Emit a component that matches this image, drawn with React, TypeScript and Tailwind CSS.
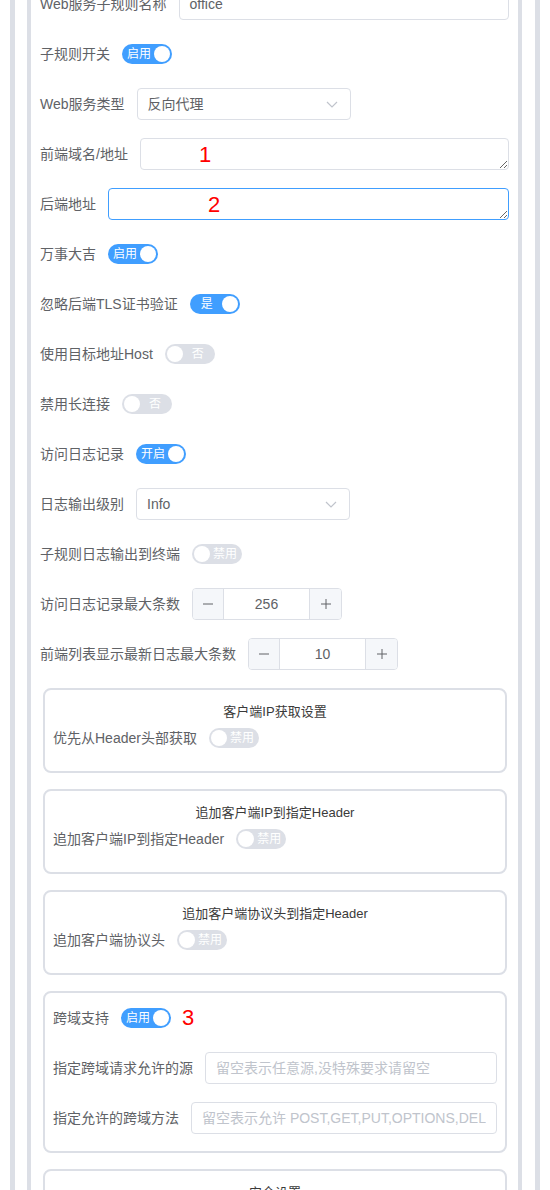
import React from "react";

const FONT = "font-['Liberation_Sans','Noto_Sans_CJK_SC',sans-serif]";

function Switch({ on, text }: { on: boolean; text: string }) {
  return (
    <div
      className={
        "w-[50px] h-[20px] rounded-full flex items-center p-[2px] shrink-0 " +
        (on ? "bg-[#409eff]" : "bg-[#dcdfe6]")
      }
    >
      {on ? (
        <>
          <span className="flex-1 text-center text-[12px] leading-[16px] text-white">{text}</span>
          <span className="w-[16px] h-[16px] rounded-full bg-white" />
        </>
      ) : (
        <>
          <span className="w-[16px] h-[16px] rounded-full bg-white" />
          <span className="flex-1 text-center text-[12px] leading-[16px] text-white">{text}</span>
        </>
      )}
    </div>
  );
}

function Label({ children }: { children: React.ReactNode }) {
  return (
    <span className="text-[14px] text-[#606266] pr-[12px] whitespace-nowrap shrink-0">{children}</span>
  );
}

function Row({ children }: { children: React.ReactNode }) {
  return <div className="flex items-center h-[32px] shrink-0">{children}</div>;
}

function Select({ value }: { value: string }) {
  return (
    <div className="w-[214px] h-[32px] border border-[#dcdfe6] rounded-[4px] flex items-center pl-[10px] pr-[12px]">
      <span className="flex-1 text-[14px] text-[#606266]">{value}</span>
      <svg width="12" height="7" viewBox="0 0 12 7" fill="none">
        <polyline points="1,1 6,6 11,1" stroke="#c0c4cc" strokeWidth="1.2" />
      </svg>
    </div>
  );
}

function InputNumber({ value }: { value: string }) {
  return (
    <div className="w-[150px] h-[32px] border border-[#dcdfe6] rounded-[4px] flex overflow-hidden">
      <div className="w-[31px] bg-[#f5f7fa] border-r border-[#dcdfe6] flex items-center justify-center">
        <svg width="12" height="12" viewBox="0 0 12 12">
          <line x1="1" y1="6" x2="11" y2="6" stroke="#606266" strokeWidth="1" />
        </svg>
      </div>
      <div className="flex-1 flex items-center justify-center text-[14px] text-[#606266]">{value}</div>
      <div className="w-[32px] bg-[#f5f7fa] border-l border-[#dcdfe6] flex items-center justify-center">
        <svg width="12" height="12" viewBox="0 0 12 12">
          <line x1="1" y1="6" x2="11" y2="6" stroke="#606266" strokeWidth="1" />
          <line x1="6" y1="1" x2="6" y2="11" stroke="#606266" strokeWidth="1" />
        </svg>
      </div>
    </div>
  );
}

function TextArea({ focused, mark, markLeft }: { focused?: boolean; mark: string; markLeft: string }) {
  return (
    <div className="relative flex-1 h-[32px]">
      <textarea
        readOnly
        className={
          "block w-full h-[32px] rounded-[4px] border outline-none resize-y " +
          (focused ? "border-[#409eff]" : "border-[#dcdfe6]")
        }
      />
      <span
        className={
          "absolute top-0 h-[32px] flex items-center pt-[2px] text-[22px] text-[#ff0000] leading-none pointer-events-none " +
          markLeft
        }
      >
        {mark}
      </span>
    </div>
  );
}

function Box({ title, children, pt = "pt-[12px]" }: { title?: string; children: React.ReactNode; pt?: string }) {
  return (
    <div className={"ml-[3px] mr-[2px] shrink-0 border-2 border-[#dcdfe6] rounded-[8px] px-[8px] pb-[17px] " + pt}>
      {title && (
        <div className="text-center text-[13px] leading-[20px] font-normal text-[#3a3a3a]">{title}</div>
      )}
      {children}
    </div>
  );
}

export default function App() {
  return (
    <div className={"w-[550px] h-[1190px] overflow-hidden bg-white " + FONT}>
      <div className="mx-[10px] h-[1190px] flex flex-col border-x-[5px] border-[#dcdfe6] pl-[12px] pr-[13px]">
        <div className="flex-1 flex flex-col border-x-4 border-[#dcdfe6] px-[9px]">
          <div className="-mt-[12px] flex flex-col gap-[18px] shrink-0">
            <Row>
              <Label>Web服务子规则名称</Label>
              <div className="flex-1 h-[32px] border border-[#dcdfe6] rounded-[4px] flex items-center pl-[10px] text-[14px] text-[#606266]">
                office
              </div>
            </Row>
            <Row>
              <Label>子规则开关</Label>
              <Switch on text="启用" />
            </Row>
            <Row>
              <Label>Web服务类型</Label>
              <Select value="反向代理" />
            </Row>
            <Row>
              <Label>前端域名/地址</Label>
              <TextArea mark="1" markLeft="left-[59px]" />
            </Row>
            <Row>
              <Label>后端地址</Label>
              <TextArea focused mark="2" markLeft="left-[100px]" />
            </Row>
            <Row>
              <Label>万事大吉</Label>
              <Switch on text="启用" />
            </Row>
            <Row>
              <Label>忽略后端TLS证书验证</Label>
              <Switch on text="是" />
            </Row>
            <Row>
              <Label>使用目标地址Host</Label>
              <Switch on={false} text="否" />
            </Row>
            <Row>
              <Label>禁用长连接</Label>
              <Switch on={false} text="否" />
            </Row>
            <Row>
              <Label>访问日志记录</Label>
              <Switch on text="开启" />
            </Row>
            <Row>
              <Label>日志输出级别</Label>
              <Select value="Info" />
            </Row>
            <Row>
              <Label>子规则日志输出到终端</Label>
              <Switch on={false} text="禁用" />
            </Row>
            <Row>
              <Label>访问日志记录最大条数</Label>
              <InputNumber value="256" />
            </Row>
            <Row>
              <Label>前端列表显示最新日志最大条数</Label>
              <InputNumber value="10" />
            </Row>
          </div>

          <div className="mt-[18px] flex flex-col gap-[16px] shrink-0">
            <Box title="客户端IP获取设置">
              <Row>
                <Label>优先从Header头部获取</Label>
                <Switch on={false} text="禁用" />
              </Row>
            </Box>
            <Box title="追加客户端IP到指定Header">
              <Row>
                <Label>追加客户端IP到指定Header</Label>
                <Switch on={false} text="禁用" />
              </Row>
            </Box>
            <Box title="追加客户端协议头到指定Header">
              <Row>
                <Label>追加客户端协议头</Label>
                <Switch on={false} text="禁用" />
              </Row>
            </Box>
            <Box pt="pt-[9px]">
              <div className="flex flex-col gap-[18px]">
                <Row>
                  <Label>跨域支持</Label>
                  <Switch on text="启用" />
                  <span className="ml-[11px] text-[22px] leading-none text-[#ff0000]">3</span>
                </Row>
                <Row>
                  <Label>指定跨域请求允许的源</Label>
                  <input
                    readOnly
                    placeholder="留空表示任意源,没特殊要求请留空"
                    className="flex-1 min-w-0 h-[32px] border border-[#dcdfe6] rounded-[4px] px-[10px] text-[14px] outline-none placeholder:text-[#c0c4cc]"
                  />
                </Row>
                <Row>
                  <Label>指定允许的跨域方法</Label>
                  <input
                    readOnly
                    placeholder="留空表示允许 POST,GET,PUT,OPTIONS,DELETE"
                    className="flex-1 min-w-0 h-[32px] border border-[#dcdfe6] rounded-[4px] px-[10px] text-[14px] outline-none placeholder:text-[#c0c4cc]"
                  />
                </Row>
              </div>
            </Box>
            <Box title="安全设置">
              <Row>
                <Label>安全设置</Label>
              </Row>
            </Box>
          </div>
        </div>
      </div>
    </div>
  );
}
